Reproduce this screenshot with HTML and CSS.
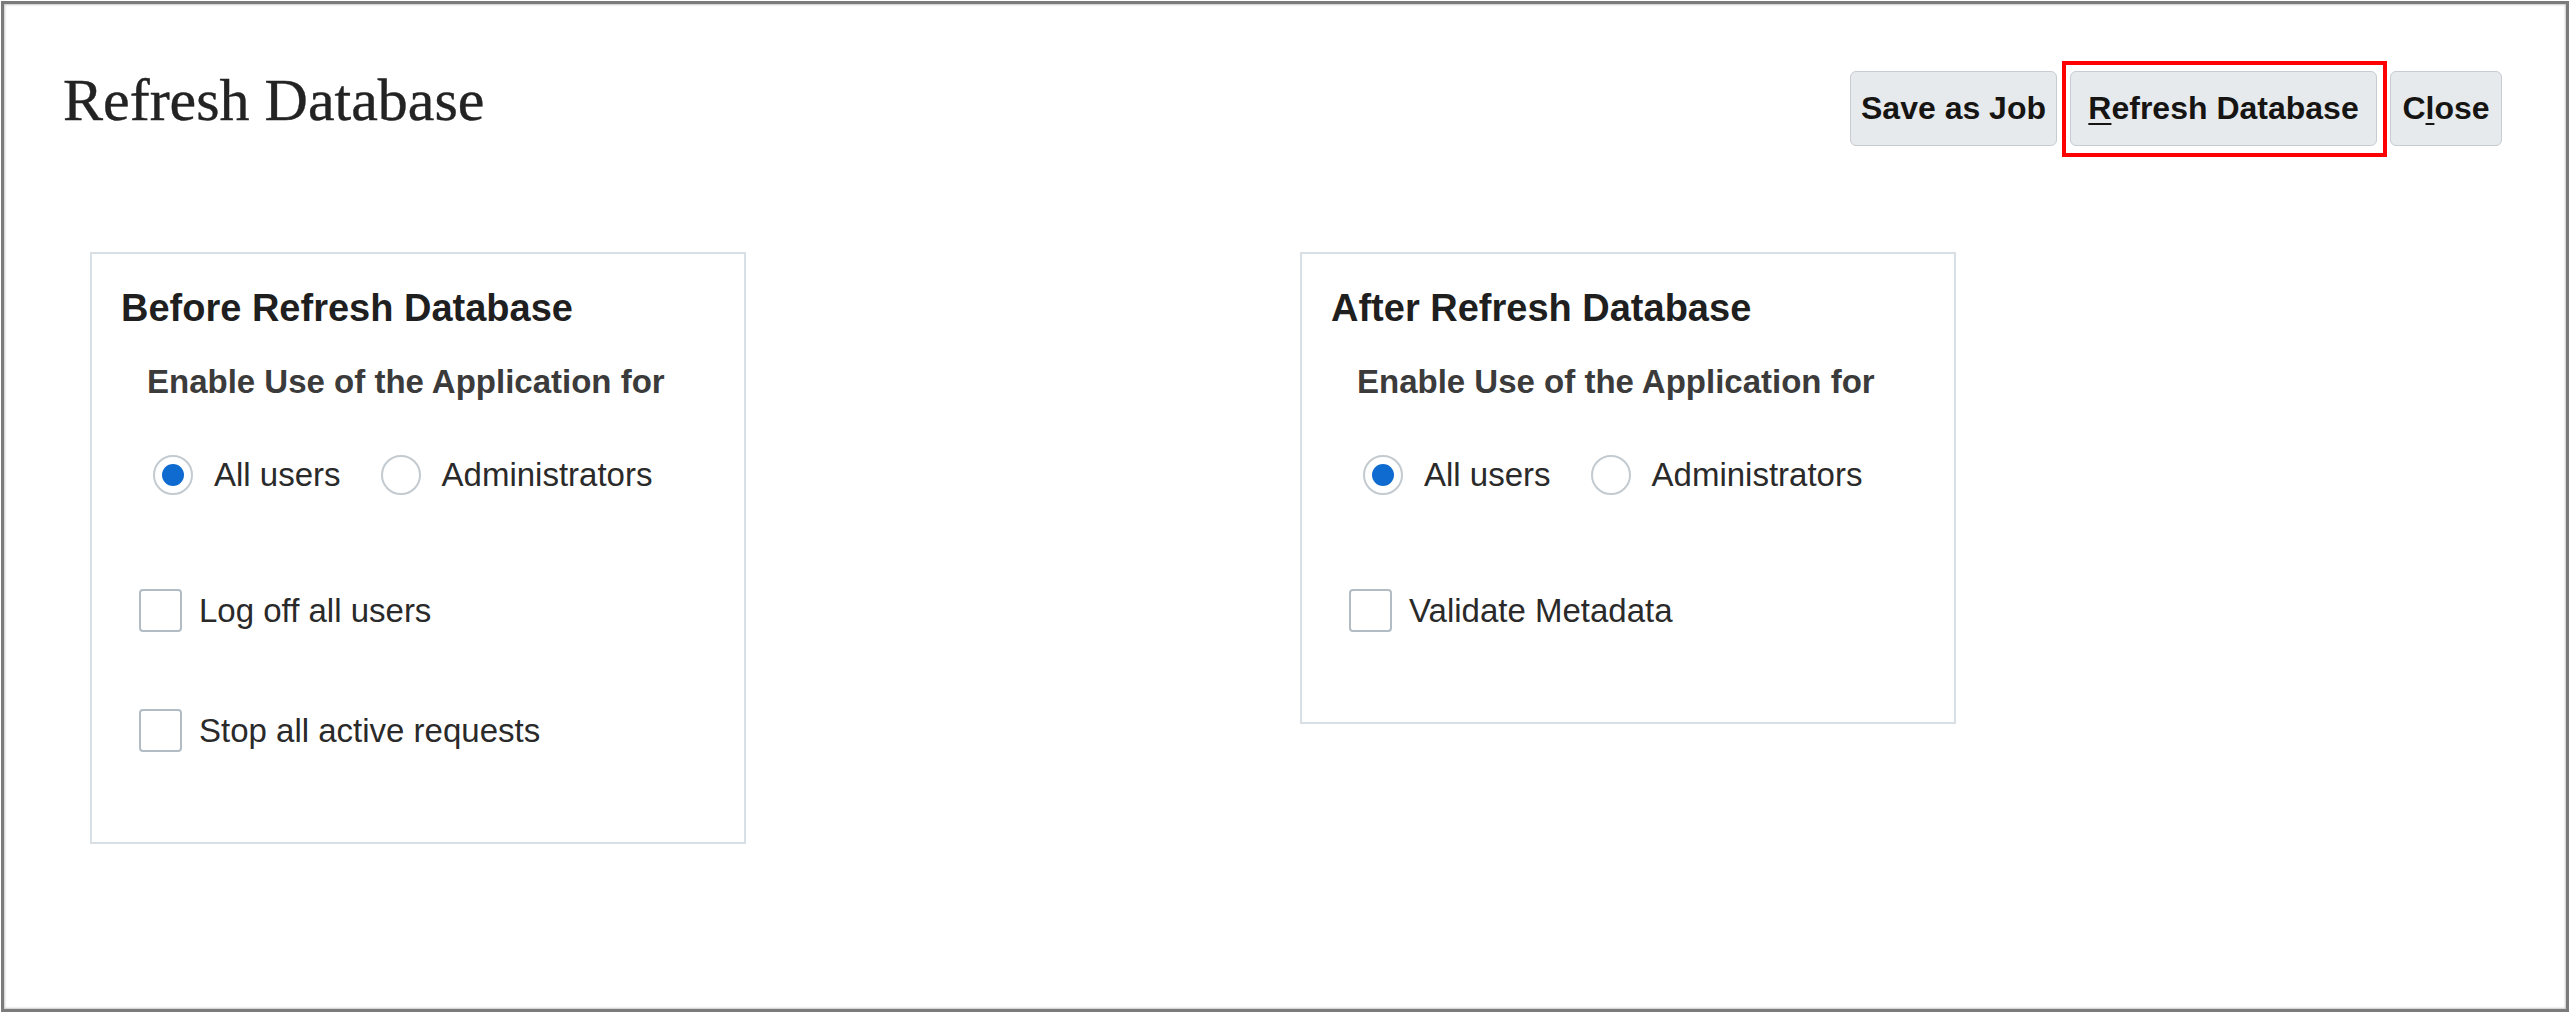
FILE: index.html
```html
<!DOCTYPE html>
<html lang="en">
<head>
<meta charset="utf-8">
<title>Refresh Database</title>
<link rel="stylesheet" href="styles.css">
</head>
<body>
<div class="frame">
  <header class="header">
    <h1 class="page-title">Refresh Database</h1>
    <div class="toolbar">
      <button class="btn btn-save" type="button">Save as Job</button>
      <button class="btn btn-refresh btn-marked" type="button"><u>R</u>efresh Database</button>
      <button class="btn btn-close" type="button">C<u>l</u>ose</button>
    </div>
  </header>

  <div class="panels">
    <section class="panel">
      <h2 class="panel-title">Before Refresh Database</h2>
      <div class="group-label">Enable Use of the Application for</div>
      <div class="radio-row">
        <label class="radio"><span class="radio-circle is-checked"></span><span class="radio-text">All users</span></label>
        <label class="radio"><span class="radio-circle"></span><span class="radio-text">Administrators</span></label>
      </div>
      <label class="check check-first"><span class="check-box"></span><span class="check-text">Log off all users</span></label>
      <label class="check check-next"><span class="check-box"></span><span class="check-text">Stop all active requests</span></label>
    </section>

    <section class="panel">
      <h2 class="panel-title">After Refresh Database</h2>
      <div class="group-label">Enable Use of the Application for</div>
      <div class="radio-row">
        <label class="radio"><span class="radio-circle is-checked"></span><span class="radio-text">All users</span></label>
        <label class="radio"><span class="radio-circle"></span><span class="radio-text">Administrators</span></label>
      </div>
      <label class="check check-first"><span class="check-box"></span><span class="check-text">Validate Metadata</span></label>
    </section>
  </div>
</div>
</body>
</html>
```

FILE: styles.css
```css
* { box-sizing: border-box; }

html, body {
  margin: 0;
  padding: 0;
  background: #ffffff;
}

body {
  font-family: "Liberation Sans", Arial, sans-serif;
  color: #1d1d1d;
}

.frame {
  width: 2568px;
  height: 1011px;
  margin: 1px 0 0 1px;
  border: 3px solid #7b7b7b;
  box-shadow: inset 0 0 2px 1px #c9c9c9;
  background: #ffffff;
}

.header {
  display: flex;
  justify-content: space-between;
  align-items: flex-start;
  padding: 66px 64px 0 59px;
}

.page-title {
  margin: 0;
  font-family: "Liberation Serif", Georgia, serif;
  font-weight: normal;
  font-size: 60px;
  line-height: 60px;
  color: #232323;
  -webkit-text-stroke: 0.4px #232323;
}

.toolbar {
  display: flex;
  gap: 13px;
  margin-top: 1px;
}

.btn {
  height: 75px;
  padding: 0;
  border: 1px solid #c6ccd1;
  border-radius: 6px;
  background: #e7eaed;
  font-family: "Liberation Sans", Arial, sans-serif;
  font-weight: bold;
  font-size: 32px;
  color: #161513;
  position: relative;
  text-align: center;
}

.btn-save { width: 207px; }
.btn-refresh { width: 307px; }
.btn-close { width: 112px; }

.btn u {
  text-decoration-thickness: 2px;
  text-underline-offset: 4px;
}

.btn-marked::after {
  content: "";
  position: absolute;
  left: -9px;
  right: -11px;
  top: -11px;
  bottom: -12px;
  border: 4px solid #ff0000;
  pointer-events: none;
}

.panels {
  display: flex;
  align-items: flex-start;
  gap: 554px;
  margin-top: 106px;
  padding-left: 86px;
}

.panel {
  width: 656px;
  border: 2px solid #d8dfe5;
  padding: 34px 20px 90px 29px;
  display: flex;
  flex-direction: column;
  align-items: flex-start;
}

.panel-title {
  margin: 0;
  font-size: 38px;
  line-height: 41px;
  font-weight: bold;
  color: #1f1f1f;
}

.group-label {
  margin: 33px 0 0 26px;
  font-size: 33px;
  line-height: 40px;
  font-weight: bold;
  color: #3b3b3b;
}

.radio-row {
  display: flex;
  align-items: center;
  gap: 40px;
  margin: 52px 0 0 32px;
  height: 42px;
}

.radio {
  display: flex;
  align-items: center;
  gap: 21px;
}

.radio-circle {
  width: 40px;
  height: 40px;
  border: 2px solid #c3cad0;
  border-radius: 50%;
  display: flex;
  align-items: center;
  justify-content: center;
  background: #ffffff;
}

.radio-circle.is-checked::before {
  content: "";
  width: 22px;
  height: 22px;
  border-radius: 50%;
  background: #0f6bd0;
}

.radio-text,
.check-text {
  font-size: 33px;
  line-height: 40px;
  color: #2a2a2a;
}

.radio-text-wide { letter-spacing: 0.3px; }

.check {
  display: flex;
  align-items: center;
  gap: 17px;
  margin-left: 18px;
  height: 43px;
}

.check-first { margin-top: 93px; }
.check-next { margin-top: 77px; }

.check-box {
  width: 43px;
  height: 43px;
  border: 2px solid #b2bcc5;
  border-radius: 4px;
  background: #ffffff;
}
```
